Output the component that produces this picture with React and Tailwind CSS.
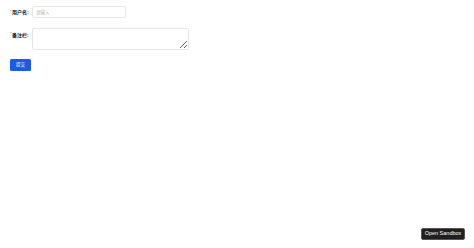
export default function App() {
  const font = { fontFamily: '"Liberation Sans", "Noto Sans CJK SC", sans-serif' };
  return (
    <div className="relative w-[474px] h-[248px] bg-white overflow-hidden" style={font}>
      <div className="flex flex-col pl-[10px] pt-[6px]">
        <div className="flex items-center h-[12px]">
          <label className="flex items-center w-[22px] text-[5px] leading-none text-[#111] font-bold">
            <span className="text-[#777] mr-[0.5px] self-start mt-[0.5px] text-[4px] font-normal">*</span>
            <span>用户名</span>
            <span>:</span>
          </label>
          <input
            className="w-[94px] h-[12px] border border-[#e6e6e6] rounded-[2px] px-[3px] text-[4.5px] outline-none placeholder:text-[#b5b5b5]"
            placeholder="请输入"
          />
        </div>
        <div className="flex items-start mt-[10px]">
          <label className="flex items-center w-[22px] mt-[5px] text-[5px] leading-none text-[#111] font-bold">
            <span className="text-[#777] mr-[0.5px] self-start mt-[-1px] text-[4px] font-normal">*</span>
            <span>备注栏</span>
            <span>:</span>
          </label>
          <textarea className="w-[157px] h-[22px] border border-[#e6e6e6] rounded-[2px] text-[4.5px] outline-none resize-y" />
        </div>
        <div className="mt-[9px]">
          <button className="w-[21px] h-[12px] bg-[#1a5ce4] rounded-[1.5px] text-white text-[4.5px] leading-none flex items-center justify-center">
            提交
          </button>
        </div>
      </div>
      <div className="absolute left-[421px] top-[228px] w-[44px] h-[12px] bg-[#1f1f1f] border border-[#555] rounded-[2px] text-white text-[5.5px] leading-none flex items-center justify-center">
        Open Sandbox
      </div>
    </div>
  );
}
